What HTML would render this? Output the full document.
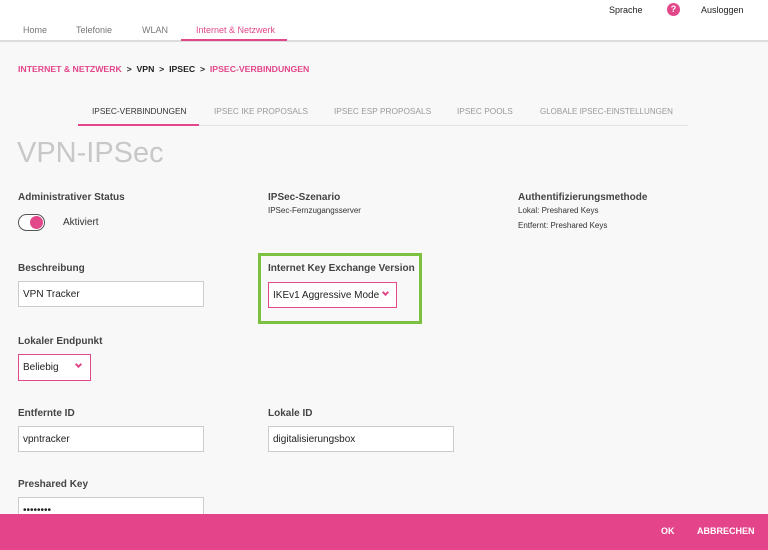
<!DOCTYPE html><html><head><style>
*{margin:0;padding:0;box-sizing:border-box}
body{width:768px;height:550px;overflow:hidden;background:#f8f8f8;font-family:"Liberation Sans",sans-serif;position:relative;color:#333}
.a{position:absolute;white-space:nowrap}
.pk{color:#e2478a}
.lbl{font-size:10px;font-weight:bold;color:#444}
.inp{position:absolute;background:#fff;border:1px solid #ccc;font-size:10px;padding:0 4px;display:flex;align-items:center;color:#222}
.sel{position:absolute;background:#fff;border:1.5px solid #e2478a;font-size:10px;padding:0 4px;display:flex;align-items:center;color:#222}
.chev{position:absolute;right:8px;top:7px;width:5px;height:5px;border-right:2px solid #e2478a;border-bottom:2px solid #e2478a;transform:rotate(45deg)}
</style></head><body>
<div class="a" style="left:0;top:0;width:768px;height:42px;background:#fff;border-bottom:2px solid #ddd"></div>
<div class="a" style="left:609px;top:5px;font-size:9px;color:#222">Sprache</div>
<div class="a" style="left:667px;top:3px;width:13px;height:13px;border-radius:50%;background:#e2478a;color:#fff;font-size:9px;font-weight:bold;text-align:center;line-height:13px">?</div>
<div class="a" style="left:701px;top:5px;font-size:9px;color:#222">Ausloggen</div>
<div class="a" style="left:23px;top:25px;font-size:9px;color:#777">Home</div>
<div class="a" style="left:76px;top:25px;font-size:9px;color:#777">Telefonie</div>
<div class="a" style="left:142px;top:25px;font-size:9px;color:#777">WLAN</div>
<div class="a pk" style="left:196px;top:25px;font-size:9px">Internet &amp; Netzwerk</div>
<div class="a" style="left:181px;top:39px;width:106px;height:2px;background:#e2478a"></div>
<div class="a" style="left:18px;top:64px;font-size:8.7px;font-weight:bold;color:#222"><span class="pk">INTERNET &amp; NETZWERK</span> &nbsp;&gt;&nbsp; VPN &nbsp;&gt;&nbsp; IPSEC &nbsp;&gt;&nbsp; <span class="pk">IPSEC-VERBINDUNGEN</span></div>
<div class="a" style="left:78px;top:125px;width:610px;height:1px;background:#e2e2e2"></div>
<div class="a" style="left:78px;top:124px;width:121px;height:2px;background:#e2478a"></div>
<div class="a" style="left:92px;top:106px;font-size:8.3px;color:#333">IPSEC-VERBINDUNGEN</div>
<div class="a" style="left:214px;top:106px;font-size:8.3px;color:#999">IPSEC IKE PROPOSALS</div>
<div class="a" style="left:334px;top:106px;font-size:8.3px;color:#999">IPSEC ESP PROPOSALS</div>
<div class="a" style="left:457px;top:106px;font-size:8.3px;color:#999">IPSEC POOLS</div>
<div class="a" style="left:540px;top:106px;font-size:8px;line-height:11px;color:#999">GLOBALE IPSEC-EINSTELLUNGEN</div>
<div class="a" style="left:17px;top:137px;font-size:29px;color:#c8c8c8">VPN-IPSec</div>
<div class="a lbl" style="left:18px;top:192px">Administrativer Status</div>
<div class="a" style="left:18px;top:214px;width:27px;height:17px;border:1.5px solid #555;border-radius:9px;background:#fff"></div>
<div class="a" style="left:30px;top:216px;width:13px;height:13px;border-radius:50%;background:#e2478a"></div>
<div class="a" style="left:63px;top:217px;font-size:10px">Aktiviert</div>
<div class="a lbl" style="left:268px;top:192px">IPSec-Szenario</div>
<div class="a" style="left:268px;top:206px;font-size:8px">IPSec-Fernzugangsserver</div>
<div class="a lbl" style="left:518px;top:192px">Authentifizierungsmethode</div>
<div class="a" style="left:518px;top:206px;font-size:8px">Lokal: Preshared Keys</div>
<div class="a" style="left:518px;top:221px;font-size:8px">Entfernt: Preshared Keys</div>
<div class="a lbl" style="left:18px;top:263px">Beschreibung</div>
<div class="inp" style="left:18px;top:281px;width:186px;height:26px">VPN Tracker</div>
<div class="a" style="left:258px;top:253px;width:164px;height:71px;border:3px solid #7dc142"></div>
<div class="a lbl" style="left:268px;top:263px">Internet Key Exchange Version</div>
<div class="sel" style="left:268px;top:282px;width:129px;height:26px">IKEv1 Aggressive Mode<span class="chev"></span></div>
<div class="a lbl" style="left:18px;top:336px">Lokaler Endpunkt</div>
<div class="sel" style="left:18px;top:354px;width:73px;height:27px">Beliebig<span class="chev" style="right:9px"></span></div>
<div class="a lbl" style="left:18px;top:408px">Entfernte ID</div>
<div class="inp" style="left:18px;top:426px;width:186px;height:26px">vpntracker</div>
<div class="a lbl" style="left:268px;top:408px">Lokale ID</div>
<div class="inp" style="left:268px;top:426px;width:186px;height:26px">digitalisierungsbox</div>
<div class="a lbl" style="left:18px;top:479px">Preshared Key</div>
<div class="inp" style="left:18px;top:497px;width:186px;height:26px">••••••••</div>
<div class="a" style="left:0;top:514px;width:768px;height:36px;background:#e4458a"></div>
<div class="a" style="left:661px;top:526px;font-size:9px;font-weight:bold;color:#fff">OK</div>
<div class="a" style="left:697px;top:526px;font-size:9px;font-weight:bold;color:#fff">ABBRECHEN</div>
</body></html>
